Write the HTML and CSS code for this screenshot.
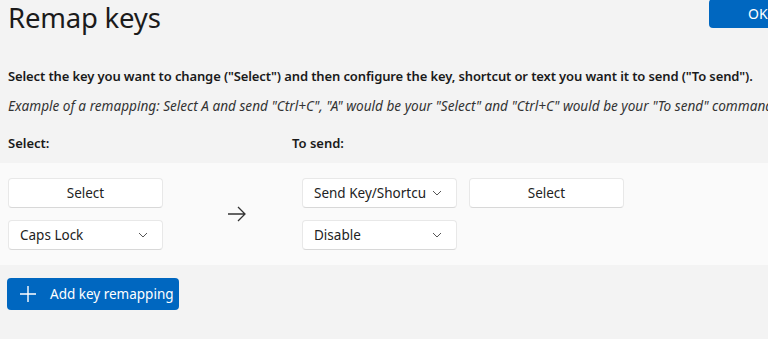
FILE: index.html
```html
<!DOCTYPE html>
<html>
<head>
<meta charset="utf-8">
<link rel="stylesheet" href="styles.css">
</head>
<body>
<div class="page">
  <header class="top">
    <h1 class="title">Remap keys</h1>
    <button class="ok">OK</button>
  </header>
  <p class="desc">Select the key you want to change ("Select") and then configure the key, shortcut or text you want it to send ("To send").</p>
  <p class="example">Example of a remapping: Select A and send "Ctrl+C", "A" would be your "Select" and "Ctrl+C" would be your "To send" command.</p>
  <div class="heads">
    <div class="head head-select">Select:</div>
    <div class="head">To send:</div>
  </div>
  <div class="row">
    <div class="col">
      <div class="btn">Select</div>
      <div class="combo"><span>Caps Lock</span><svg class="chev" width="10" height="6" viewBox="0 0 10 6"><path d="M1 1l4 4 4-4" fill="none" stroke="#555" stroke-width="1"/></svg></div>
    </div>
    <div class="arrow"><svg width="20" height="16" viewBox="0 0 20 16"><path d="M1 8h17M11 1l7 7-7 7" fill="none" stroke="#333" stroke-width="1.3"/></svg></div>
    <div class="col">
      <div class="combo"><span>Send Key/Shortcu</span><svg class="chev" width="10" height="6" viewBox="0 0 10 6"><path d="M1 1l4 4 4-4" fill="none" stroke="#555" stroke-width="1"/></svg></div>
      <div class="combo"><span>Disable</span><svg class="chev" width="10" height="6" viewBox="0 0 10 6"><path d="M1 1l4 4 4-4" fill="none" stroke="#555" stroke-width="1"/></svg></div>
    </div>
    <div class="col">
      <div class="btn">Select</div>
    </div>
  </div>
  <div class="add-wrap">
    <button class="add"><svg width="16" height="16" viewBox="0 0 16 16"><path d="M8 0v16M0 8h16" stroke="#fff" stroke-width="1.4"/></svg><span>Add key remapping</span></button>
  </div>
</div>
</body>
</html>
```
FILE: styles.css
```css
html, body {
  margin: 0;
  padding: 0;
  background: #f3f3f3;
  overflow: hidden;
}
body {
  font-family: "Noto Sans", "Open Sans", sans-serif;
  color: #1a1a1a;
  width: 768px;
  height: 339px;
}
.page {
  width: 768px;
}
.top {
  display: flex;
  justify-content: space-between;
  align-items: flex-start;
  height: 40px;
}
.title {
  margin: 0;
  padding-left: 8px;
  font-weight: 400;
  font-size: 27.5px;
  line-height: 36px;
  color: #1b1b1b;
  letter-spacing: -0.2px;
}
.ok {
  width: 70px;
  height: 29px;
  margin: -1px -11px 0 0;
  border: none;
  border-radius: 4px;
  background: #0067c0;
  color: #fff;
  font-family: inherit;
  font-size: 14px;
  text-align: left;
  padding-left: 39px;
}
.desc {
  margin: 26px 0 0 8px;
  font-size: 13px;
  font-weight: 600;
  line-height: 20px;
  white-space: nowrap;
  letter-spacing: -0.12px;
}
.example {
  margin: 10px 0 0 8px;
  font-size: 13.6px;
  font-style: italic;
  line-height: 20px;
  white-space: nowrap;
  color: #333;
}
.heads {
  display: flex;
  margin-top: 17px;
  padding-left: 8px;
  height: 20px;
  font-size: 13px;
  font-weight: 600;
  line-height: 20px;
}
.head-select {
  width: 284px;
}
.row {
  margin-top: 10px;
  background: #fafafa;
  display: flex;
  padding: 15px 8px;
  height: 72px;
  gap: 12px;
}
.col {
  display: flex;
  flex-direction: column;
  gap: 12px;
}
.btn, .combo {
  width: 155px;
  height: 30px;
  box-sizing: border-box;
  background: #fff;
  border: 1px solid #e8e8e8;
  border-bottom-color: #d8d8d8;
  border-radius: 4px;
  font-size: 13.5px;
  color: #222;
  display: flex;
  align-items: center;
}
.btn {
  justify-content: center;
}
.combo {
  justify-content: space-between;
  padding: 0 14px 0 11px;
}
.chev {
  flex: none;
}
.arrow {
  width: 115px;
  display: flex;
  align-items: center;
  justify-content: center;
  padding-left: 8px;
  box-sizing: border-box;
}
.add-wrap {
  padding: 13px 0 0 7px;
}
.add {
  display: flex;
  align-items: center;
  gap: 14px;
  height: 32px;
  width: 172px;
  box-sizing: border-box;
  padding: 0 0 0 13px;
  border: none;
  border-radius: 4px;
  background: #0067c0;
  color: #fff;
  font-family: inherit;
  font-size: 13.5px;
}
```
